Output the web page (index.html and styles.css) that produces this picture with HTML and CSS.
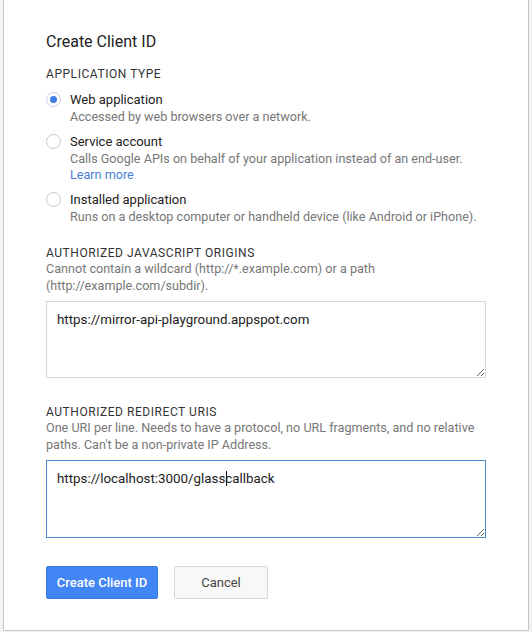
FILE: index.html
```html
<!DOCTYPE html>
<html lang="en">
<head>
<meta charset="utf-8">
<title>Create Client ID</title>
<link rel="stylesheet" href="styles.css">
</head>
<body>
<div class="dialog">
  <h1 class="title">Create Client ID</h1>

  <div class="section-head">Application type</div>
  <div class="options">
    <label class="option">
      <span class="radio checked"><span class="dot"></span></span>
      <span class="opt-text">
        <span class="opt-label">Web application</span>
        <span class="opt-desc">Accessed by web browsers over a network.</span>
      </span>
    </label>
    <label class="option">
      <span class="radio"></span>
      <span class="opt-text">
        <span class="opt-label">Service account</span>
        <span class="opt-desc">Calls Google APIs on behalf of your application instead of an end-user.<br><a class="link" href="#">Learn more</a></span>
      </span>
    </label>
    <label class="option">
      <span class="radio"></span>
      <span class="opt-text">
        <span class="opt-label">Installed application</span>
        <span class="opt-desc">Runs on a desktop computer or handheld device (like Android or iPhone).</span>
      </span>
    </label>
  </div>

  <div class="section-head js-head">Authorized JavaScript origins</div>
  <div class="help">Cannot contain a wildcard (http://*.example.com) or a path<br>(http://example.com/subdir).</div>
  <div class="field">
    <textarea class="box">https://mirror-api-playground.appspot.com</textarea>
  </div>

  <div class="section-head redirect-head">Authorized redirect URIs</div>
  <div class="help">One URI per line. Needs to have a protocol, no URL fragments, and no relative<br>paths. Can't be a non-private IP Address.</div>
  <div class="field">
    <textarea class="box focused">https://localhost:3000/glasscallback</textarea>
    <span class="caret"></span>
  </div>

  <div class="actions">
    <button class="btn primary" type="button">Create Client ID</button>
    <button class="btn secondary" type="button">Cancel</button>
  </div>
</div>
</body>
</html>
```

FILE: styles.css
```css
html, body {
  margin: 0;
  padding: 0;
}
body {
  background: #f3f3f3;
  font-family: Roboto, "Liberation Sans", Arial, sans-serif;
  color: #222;
  height: 632px;
  overflow: hidden;
}
.dialog {
  box-sizing: border-box;
  margin-left: 3px;
  width: 526px;
  height: 631px;
  background: #fff;
  border: 1px solid #c6c6c6;
  border-top: none;
  padding: 32px 42px 0 42px;
  display: flex;
  flex-direction: column;
}
.title {
  margin: 0;
  font-size: 16px;
  line-height: 20px;
  font-weight: 400;
  color: #222;
}
.section-head {
  margin-top: 14px;
  font-size: 12px;
  line-height: 16px;
  text-transform: uppercase;
  letter-spacing: 0.55px;
  color: #333;
}
.options {
  margin-top: 9px;
  display: flex;
  flex-direction: column;
  gap: 8px;
}
.option {
  display: flex;
  gap: 9px;
  align-items: flex-start;
}
.radio {
  box-sizing: border-box;
  width: 15px;
  height: 15px;
  margin-top: 1px;
  border: 1px solid #c8c8c8;
  border-radius: 50%;
  background: #fff;
  display: flex;
  align-items: center;
  justify-content: center;
  flex: none;
}
.radio.checked {
  border-color: #c6d3e8;
}
.dot {
  width: 7px;
  height: 7px;
  border-radius: 50%;
  background: #3f7ee8;
}
.opt-text {
  display: flex;
  flex-direction: column;
}
.opt-label {
  font-size: 13px;
  line-height: 18px;
  color: #222;
}
.opt-desc {
  font-size: 12.6px;
  line-height: 16px;
  color: #777;
}
.link {
  color: #4a7fd8;
  text-decoration: none;
}
.js-head {
  margin-top: 20px;
}
.redirect-head {
  margin-top: 26px;
}
.help {
  font-size: 12.6px;
  line-height: 16.5px;
  color: #777;
}
.field {
  position: relative;
  margin-top: 7px;
}
.box {
  display: block;
  box-sizing: border-box;
  width: 440px;
  height: 77px;
  margin: 0;
  padding: 10px 10px;
  border: 1px solid #d6d6d6;
  border-radius: 0;
  font-family: Roboto, "Liberation Sans", Arial, sans-serif;
  font-size: 13.35px;
  line-height: 16px;
  color: #222;
  background: #fff;
  outline: none;
}
.box.focused {
  height: 78px;
  border-color: #4d8ac9;
}
.caret {
  position: absolute;
  left: 179.5px;
  top: 11px;
  width: 1px;
  height: 15px;
  background: #111;
}
.actions {
  margin-top: 28px;
  display: flex;
  gap: 16px;
}
.btn {
  box-sizing: border-box;
  height: 33px;
  font-family: Roboto, "Liberation Sans", Arial, sans-serif;
  font-size: 13px;
  border-radius: 2px;
  padding: 0;
  cursor: pointer;
}
.primary {
  width: 112px;
  background: #4285f4;
  border: 1px solid #3b78e0;
  color: #fff;
  font-weight: 500;
}
.secondary {
  width: 94px;
  background: #f8f8f8;
  border: 1px solid #d9d9d9;
  color: #444;
}
```
